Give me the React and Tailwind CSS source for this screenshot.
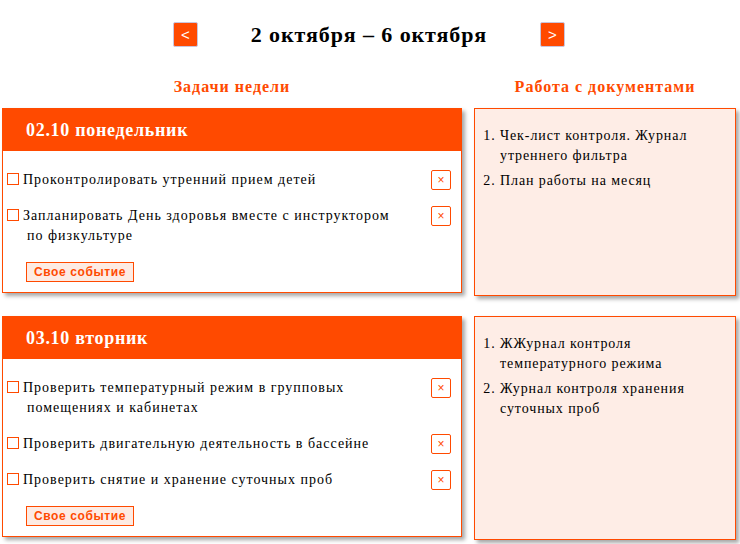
import React from 'react'

const days = [
  {
    title: '02.10 понедельник',
    tasks: [
      'Проконтролировать утренний прием детей',
      'Запланировать День здоровья вместе с инструктором по физкультуре',
    ],
    docs: ['Чек-лист контроля. Журнал утреннего фильтра', 'План работы на месяц'],
  },
  {
    title: '03.10 вторник',
    tasks: [
      'Проверить температурный режим в групповых помещениях и кабинетах',
      'Проверить двигательную деятельность в бассейне',
      'Проверить снятие и хранение суточных проб',
    ],
    docs: ['ЖЖурнал контроля температурного режима', 'Журнал контроля хранения суточных проб'],
  },
]

const sans = { fontFamily: '"Liberation Sans", Arial, sans-serif' }

function ArrowButton({ children }) {
  return (
    <button
      type="button"
      className="flex h-[25px] w-[25px] items-center justify-center rounded-[2px] border border-[#c9c5de] bg-[#ff4a00] text-[15px] leading-none text-white"
      style={sans}
    >
      {children}
    </button>
  )
}

function Task({ text }) {
  return (
    <div className="flex items-start justify-between pr-[10px]">
      <div className="flex-1 pl-[24px] -indent-[20px] text-[14px] leading-[20px] tracking-[1px] text-black">
        <span className="mr-[4px] inline-block h-[12px] w-[12px] border border-[#ff4a00] bg-white align-[-1px]" />
        {text}
      </div>
      <button
        type="button"
        className="ml-[28px] flex h-[20px] w-[20px] shrink-0 items-center justify-center rounded-[2px] border border-[#ff4a00] bg-white text-[12px] leading-none text-[#ff4a00]"
        style={sans}
      >
        ×
      </button>
    </div>
  )
}

function DayCard({ day }) {
  return (
    <div className="mb-[3px] border border-[#ff4a00] bg-white shadow-[3px_3px_4px_rgba(0,0,0,0.35)]">
      <div className="flex h-[42px] items-center bg-[#ff4a00] pl-[23px] text-[18px] font-bold tracking-[0.7px] text-white">
        {day.title}
      </div>
      <div className="flex flex-col gap-[16px] pt-[19px] pb-[10px]">
        {day.tasks.map(t => (
          <Task key={t} text={t} />
        ))}
        <div className="flex pl-[23px]">
          <button
            type="button"
            className="h-[20px] border border-[#ff4a00] bg-[#fdebe3] px-[7px] text-[12px] font-bold leading-none tracking-[0.6px] text-[#ff4a00]"
            style={sans}
          >
            Свое событие
          </button>
        </div>
      </div>
    </div>
  )
}

function DocsCard({ docs }) {
  return (
    <div className="border border-[#ff4a00] bg-[#feede6] shadow-[3px_3px_4px_rgba(0,0,0,0.35)]">
      <ol className="list-decimal pl-[25px] pr-[15px] pt-[17px] text-[14px] leading-[20px] tracking-[0.9px] text-black">
        {docs.map(d => (
          <li key={d} className="mb-[5px]">{d}</li>
        ))}
      </ol>
    </div>
  )
}

export default function App() {
  return (
    <div
      className="h-[544px] w-[740px] overflow-hidden bg-white"
      style={{ fontFamily: '"Liberation Serif", "Times New Roman", serif' }}
    >
      <div className="flex items-center justify-center pt-[22px] pr-[2px]">
        <ArrowButton>&lt;</ArrowButton>
        <h1 className="w-[342px] text-center text-[22px] font-bold leading-[25px] tracking-[0.9px] text-black">
          2 октября – 6 октября
        </h1>
        <ArrowButton>&gt;</ArrowButton>
      </div>

      <div className="grid grid-cols-[460px_262px] gap-x-[12px] pl-[2px] pt-[30px]">
        <div className="text-center text-[16px] font-bold leading-[20px] tracking-[1px] text-[#ff4a00]">Задачи недели</div>
        <div className="text-center text-[16px] font-bold leading-[20px] tracking-[1px] text-[#ff4a00]">Работа с документами</div>
      </div>

      <div className="mt-[11px] grid grid-cols-[460px_262px] gap-x-[12px] gap-y-[20px] pl-[2px]">
        {days.map(day => (
          <React.Fragment key={day.title}>
            <DayCard day={day} />
            <DocsCard docs={day.docs} />
          </React.Fragment>
        ))}
      </div>
    </div>
  )
}
